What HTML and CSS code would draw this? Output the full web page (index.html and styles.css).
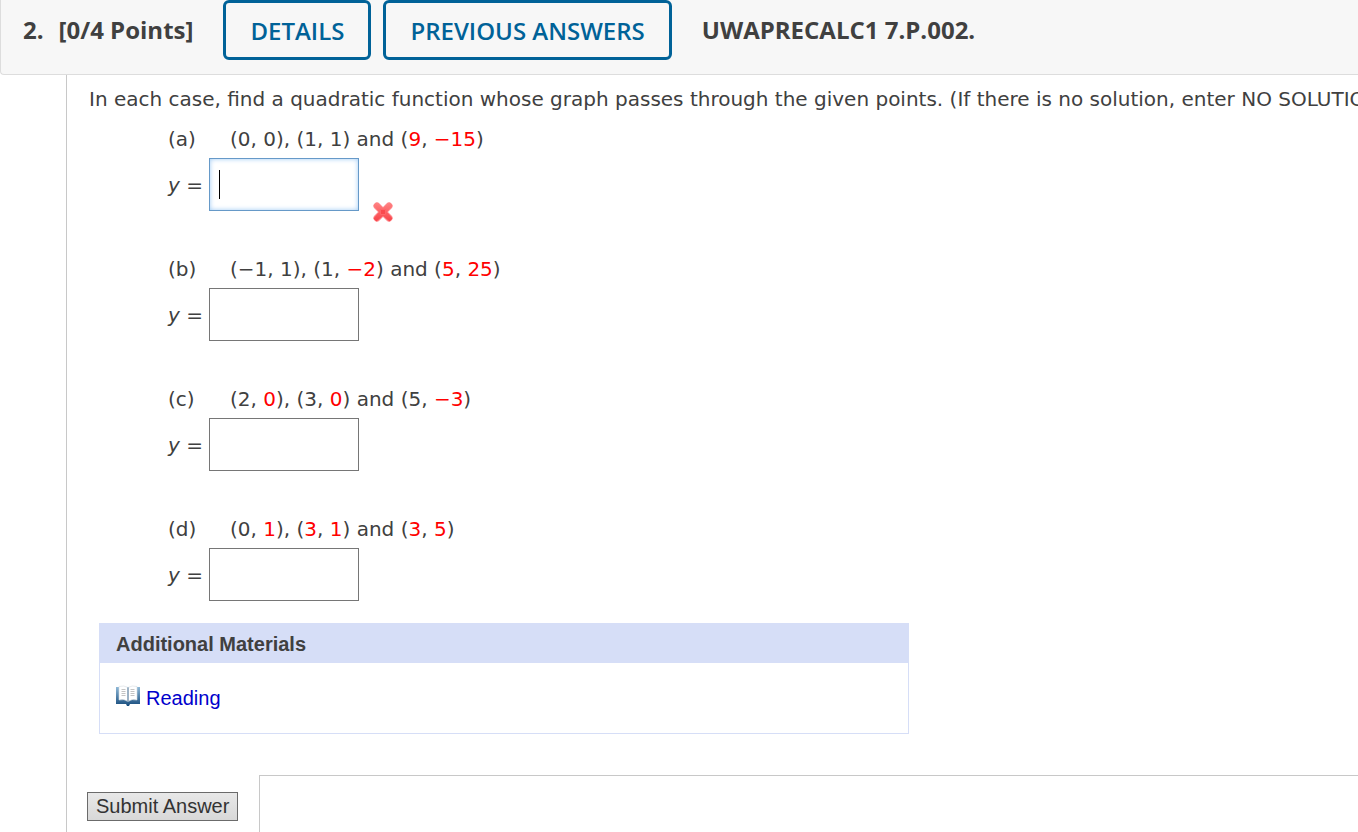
FILE: index.html
```
<!DOCTYPE html>
<html lang="en">
<head>
  <meta charset="UTF-8">
  <meta name="viewport" content="width=device-width, initial-scale=1">
  <title>UWAPRECALC1 7.P.002.</title>
  <link rel="stylesheet" href="styles.css">
</head>
<body>
  <header class="question-header">
    <span class="number">2.</span>
    <span class="points">[0/4 Points]</span>
    <button type="button" class="header-button">DETAILS</button>
    <button type="button" class="header-button">PREVIOUS ANSWERS</button>
    <span class="question-name">UWAPRECALC1 7.P.002.</span>
  </header>

  <main class="question">
    <p class="prompt">In each case, find a quadratic function whose graph passes through the given points. (If there is no solution, enter NO SOLUTION.)</p>

    <div class="parts">
      <section>
        <p class="points-line"><span class="letter">(a)</span>(0, 0), (1, 1) and (<b>9</b>, <b>−15</b>)</p>
        <div class="answer">
          <label for="answerA"><i>y</i> =</label>
          <span class="field focused"><input type="text" id="answerA"></span>
          <svg class="wrong" viewBox="0 0 22 22" role="img" aria-label="Incorrect">
            <defs>
              <linearGradient id="cross" x1="0" y1="0" x2="0" y2="1">
                <stop offset="0" stop-color="#ff8080"/>
                <stop offset="1" stop-color="#f8454b"/>
              </linearGradient>
            </defs>
            <path d="M5 5L17 17M17 5L5 17" stroke="#ff8488" stroke-width="7" stroke-linecap="round"/>
            <path d="M4.500 2.500L11 8L17.500 2.500L19.500 4.500L14 11L19.500 17.500L17.500 19.500L11 14L4.500 19.500L2.500 17.500L8 11L2.500 4.500Z" fill="url(#cross)" stroke="url(#cross)" stroke-width="1.500" stroke-linejoin="round"/>
            <path d="M8.500 8.500h5v5h-5z" fill="#fa4a4e" stroke="#ff6568"/>
          </svg>
        </div>
      </section>

      <section>
        <p class="points-line"><span class="letter">(b)</span>(−1, 1), (1, <b>−2</b>) and (<b>5</b>, <b>25</b>)</p>
        <div class="answer">
          <label for="answerB"><i>y</i> =</label>
          <span class="field"><input type="text" id="answerB"></span>
        </div>
      </section>

      <section>
        <p class="points-line"><span class="letter">(c)</span>(2, <b>0</b>), (3, <b>0</b>) and (5, <b>−3</b>)</p>
        <div class="answer">
          <label for="answerC"><i>y</i> =</label>
          <span class="field"><input type="text" id="answerC"></span>
        </div>
      </section>

      <section>
        <p class="points-line"><span class="letter">(d)</span>(0, <b>1</b>), (<b>3</b>, <b>1</b>) and (<b>3</b>, <b>5</b>)</p>
        <div class="answer">
          <label for="answerD"><i>y</i> =</label>
          <span class="field"><input type="text" id="answerD"></span>
        </div>
      </section>
    </div>

    <section class="materials">
      <h3>Additional Materials</h3>
      <a href="#reading">
        <svg class="book" viewBox="0 0 24 22" aria-hidden="true">
          <defs>
            <linearGradient id="cover" x1="0" y1="0" x2="0" y2="1">
              <stop offset="0" stop-color="#8fb9d8"/>
              <stop offset="1" stop-color="#164b7c"/>
            </linearGradient>
          </defs>
          <path d="M0 2h24v17H14l-1 2h-2l-1-2H0z" fill="url(#cover)"/>
          <path d="M3 1.500Q8 0 12 2.500Q16 0 21 1.500V15Q16 13.500 12 16.500Q8 13.500 3 15z" fill="#fff" stroke="#d5dbe0" stroke-width=".6"/>
          <path d="M12 2.500v14" stroke="#5c7f9e" stroke-width="1.200"/>
          <path d="M5.500 4.500h4M5.500 6.500h4M5.500 8.500h4M5.500 10.500h4M14.500 4.500h4M14.500 6.500h4M14.500 8.500h4M14.500 10.500h4" stroke="#c4c4c4"/>
        </svg>
        Reading
      </a>
    </section>

    <footer class="submit-row">
      <div class="submit-cell"><button type="submit" class="submit">Submit Answer</button></div>
      <div class="submission-info"></div>
    </footer>
  </main>
</body>
</html>
```
FILE: styles.css
```
body {
  margin: 0;
  min-height: 100vh;
  display: flex;
  flex-direction: column;
  overflow: hidden;
  background: #fff;
  color: #404040;
  font-family: Verdana, "DejaVu Sans", sans-serif;
  font-size: 20px;
  line-height: 26px;
}
p,
h3 {
  margin: 0;
}

/* Header bar */
.question-header {
  display: flex;
  align-items: center;
  box-sizing: border-box;
  height: 75px;
  padding: 0 22px 14px;
  border: 1px solid #ddd;
  border-width: 0 0 1px 1px;
  border-bottom-left-radius: 4px;
  background: #f7f7f7;
  font-family: "Open Sans", sans-serif;
  font-size: 24px;
  font-weight: 700;
  white-space: nowrap;
}
.number {
  margin-right: 15px;
}
.points {
  margin-right: 30px;
}
.header-button {
  height: 60px;
  margin-right: 12px;
  padding: 0 24px;
  border: 3px solid #006298;
  border-radius: 6px;
  background: transparent;
  color: #006298;
  font: 600 24px "Open Sans", sans-serif;
  cursor: pointer;
}
.question-name {
  margin-left: 18px;
}

/* Question body */
.question {
  flex: 1;
  display: flex;
  flex-direction: column;
  margin-left: 66px;
  padding-top: 11px;
  border-left: 1px solid #c8c8c8;
}
.prompt {
  padding-left: 22px;
  margin-bottom: 14px;
  white-space: nowrap;
}
.parts {
  display: flex;
  flex-direction: column;
  gap: 45px;
  padding-left: 101px;
}
.letter {
  display: inline-block;
  width: 62px;
}
.points-line b {
  color: #f00;
  font-weight: 400;
}
.answer {
  display: flex;
  align-items: center;
  margin-top: 6px;
}
.answer label {
  width: 41px;
}
.field {
  position: relative;
  display: flex;
}
.field input {
  box-sizing: border-box;
  width: 150px;
  height: 53px;
  padding: 0 10px;
  border: 1px solid #767676;
  background: #fff;
  font: inherit;
}
.focused input {
  border-color: #6699c8;
  box-shadow: inset 0 0 5px #9fcbf5;
}
/* Text cursor */
.focused::after {
  content: "";
  position: absolute;
  left: 10px;
  top: 12px;
  width: 1px;
  height: 29px;
  background: #000;
}
.wrong {
  align-self: flex-end;
  width: 22px;
  height: 22px;
  margin: 0 0 -12px 13px;
}

/* Additional materials */
.materials {
  box-sizing: border-box;
  width: 810px;
  margin: 22px 0 0 32px;
  border: 1px solid #d6def7;
  font-family: Arial, "Liberation Sans", sans-serif;
}
.materials h3 {
  padding: 7px 16px 6px;
  background: #d6def7;
  font-size: 20px;
}
.materials a {
  display: flex;
  align-items: center;
  gap: 6px;
  padding: 22px 16px;
  color: #00c;
  text-decoration: none;
}
.book {
  width: 24px;
  height: 22px;
  margin-bottom: 4px;
}

/* Submit area */
.submit-row {
  flex: 1;
  display: flex;
  margin-top: 41px;
}
.submit-cell {
  box-sizing: border-box;
  width: 192px;
  padding: 17px 0 0 20px;
}
.submit {
  height: 29px;
  padding: 0 8px;
  border: 1px solid #6b6b6b;
  background: linear-gradient(#e8e8e8, #d8d8d8);
  color: #333;
  font: 20px Arial, "Liberation Sans", sans-serif;
  white-space: nowrap;
}
.submission-info {
  flex: 1;
  border: 1px solid #c8c8c8;
  border-width: 1px 0 0 1px;
}
```
